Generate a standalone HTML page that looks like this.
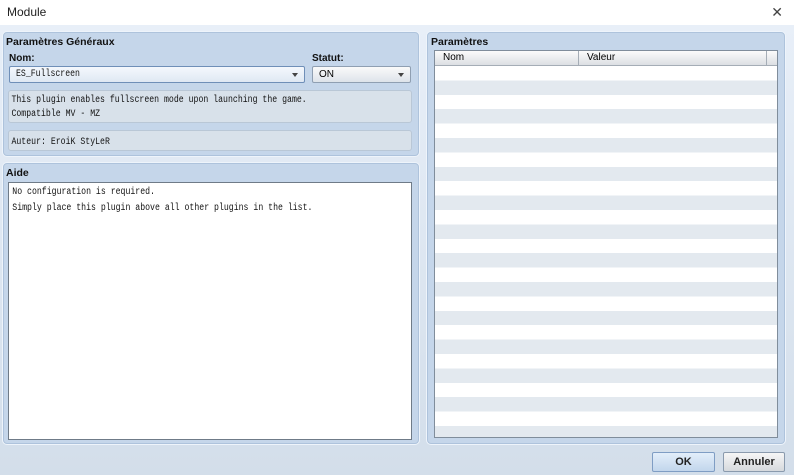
<!DOCTYPE html>
<html><head><meta charset="utf-8"><style>
*{box-sizing:border-box;margin:0;padding:0}
body{width:794px;height:475px;overflow:hidden;font-family:"Liberation Sans",sans-serif;background:linear-gradient(#e9f0f9,#d3deea);position:relative}
.abs{position:absolute}
.title{left:0;top:0;width:794px;height:25px;background:#fff;font-size:12px;color:#222;padding:5px 0 0 7px}
.close{right:11px;top:4px;font-size:14px;color:#444;font-weight:300}
.panel{background:#c5d6ea;border:1px solid #aec3dc;border-radius:4px;box-shadow:0 0 0 1px #eef4fb}
.lbl{font-size:10.5px;font-weight:bold;color:#111}
.mono{font-family:"Liberation Mono",monospace;font-size:10px;color:#111;line-height:13px;display:inline-block;transform:scaleX(0.82);transform-origin:0 0;white-space:nowrap}
.box{background:#d8e1ea;border:1px solid #b9c7d6;border-radius:3px}
.dd{background:linear-gradient(#fafafa,#dde3ea);border:1px solid #8f9fb2;border-radius:2px}
.arr{position:absolute;right:6px;top:6px;width:0;height:0;border-left:3px solid transparent;border-right:3px solid transparent;border-top:4px solid #444}
.btn{border:1px solid #8a9aad;border-radius:2px;font-size:11px;font-weight:bold;text-align:center;padding-top:3px;color:#222}
</style></head><body>
<div class="abs title">Module</div>
<div class="abs close">✕</div>

<div class="abs panel" style="left:3px;top:32px;width:416px;height:124px"></div>
<div class="abs lbl" style="left:6px;top:36px">Paramètres Généraux</div>
<div class="abs lbl" style="left:9px;top:53px;font-size:10px">Nom:</div>
<div class="abs lbl" style="left:312px;top:53px;font-size:10px">Statut:</div>
<div class="abs dd" style="left:9px;top:66px;width:296px;height:17px;background:linear-gradient(#f4f8fd,#dfe8f3);border-color:#6f8fb8"><span class="mono abs" style="left:6px;top:1px">ES_Fullscreen</span><div class="arr"></div></div>
<div class="abs dd" style="left:312px;top:66px;width:99px;height:17px"><span class="abs" style="left:6px;top:2px;font-size:10px">ON</span><div class="arr"></div></div>
<div class="abs box" style="left:8px;top:90px;width:404px;height:33px"><div class="mono" style="padding:3px 0 0 3px;line-height:14px">This plugin enables fullscreen mode upon launching the game.<br>Compatible MV - MZ</div></div>
<div class="abs box" style="left:8px;top:130px;width:404px;height:21px"><div class="mono" style="padding:3px 0 0 3px">Auteur: EroiK StyLeR</div></div>

<div class="abs panel" style="left:3px;top:163px;width:416px;height:281px"></div>
<div class="abs lbl" style="left:6px;top:167px">Aide</div>
<div class="abs" style="left:8px;top:182px;width:404px;height:258px;background:#fff;border:1px solid #6f7b88"><div class="mono" style="padding:2px 0 0 4px;line-height:16px">No configuration is required.<br>Simply place this plugin above all other plugins in the list.</div></div>

<div class="abs panel" style="left:427px;top:32px;width:358px;height:412px"></div>
<div class="abs lbl" style="left:431px;top:36px">Paramètres</div>
<div class="abs" style="left:434px;top:50px;width:344px;height:388px;border:1px solid #808d9b;background:#fff;overflow:hidden">
<div style="height:15px;background:linear-gradient(#fbfbfb,#dcdfe3);border-bottom:1px solid #a5adb6;font-size:10px;position:relative">
<span class="abs" style="left:8px;top:1px">Nom</span>
<div class="abs" style="left:143px;top:0;width:1px;height:15px;background:#a5adb6"></div>
<span class="abs" style="left:152px;top:1px">Valeur</span>
<div class="abs" style="left:331px;top:0;width:1px;height:15px;background:#a5adb6"></div>
</div>
<div style="height:372px;background:repeating-linear-gradient(#fff 0 14.4px,#e3e9ef 14.4px 28.8px)"></div>
</div>

<div class="abs btn" style="left:652px;top:452px;width:63px;height:20px;background:linear-gradient(#e3eefa,#c2d6ec);border-color:#7f9dc4">OK</div>
<div class="abs btn" style="left:723px;top:452px;width:62px;height:20px;background:linear-gradient(#f6f6f6,#d6d9dd)">Annuler</div>
</body></html>
